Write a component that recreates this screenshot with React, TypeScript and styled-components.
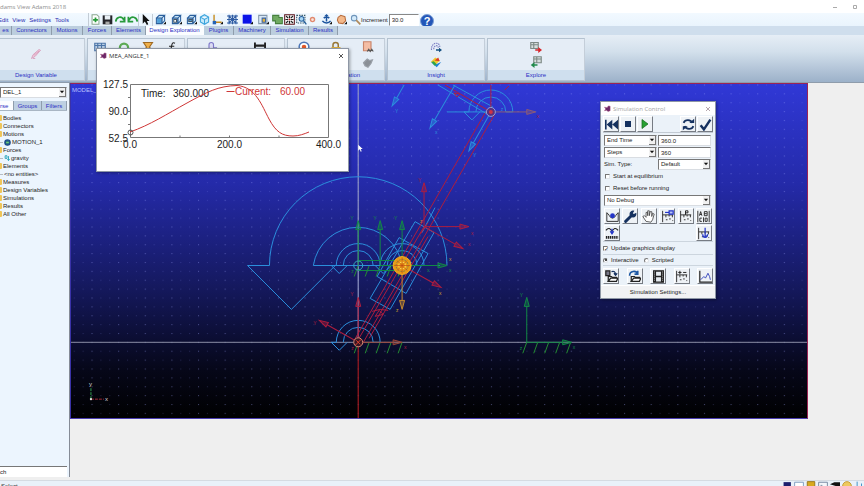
import React, { ReactNode } from 'react';
import styled, { createGlobalStyle } from 'styled-components';

const GlobalStyle = createGlobalStyle`
  * { box-sizing: border-box; }
  html, body, #root { margin: 0; height: 100%; }
  body { font: 6px/8px "Liberation Sans", Arial, sans-serif; color: #222; overflow: hidden; }
  button, input, select { font: inherit; color: inherit; margin: 0; padding: 0; border: 0; border-radius: 0; background: none; }
`;

/* ---------- frame ---------- */
const Shell = styled.div`
  position: relative; display: flex; flex-direction: column;
  min-height: 100vh; height: 100%; background: #efefef; overflow: hidden;
`;
const TitleBar = styled.header`
  display: flex; justify-content: space-between; align-items: center; height: 13px; flex: none;
  background: #fff; color: #8d8d8d; font-family: "Open Sans", sans-serif;
`;
const Caption = styled.h1`margin: 0; font-size: 6px; line-height: 12px; font-weight: 400;`;
const WindowButtons = styled.div`display: flex; gap: 12px; padding-right: 5px;`;
const CaptionButton = styled.button`width: 8px; height: 8px; display: grid; place-items: center;`;

const MenuRow = styled.div`
  display: flex; align-items: center; height: 13px; flex: none;
  background: linear-gradient(#f2f9ff, #e9f4fd);
`;
const Menus = styled.nav`display: flex; gap: 4px; width: 90px; margin-left: -2px;`;
const MenuButton = styled.button`color: #2629b0; white-space: nowrap;`;
const ToolStrip = styled.div`
  display: flex; align-items: center; border-left: 1px solid #c3ccd5; height: 13px;
`;
const ToolButton = styled.button<{ $w: number; $sep?: boolean }>`
  width: ${p => p.$w}px; height: 12px; display: grid; place-items: center;
  border-left: ${p => (p.$sep ? '1px solid #c3ccd5' : '0')};
`;
const IncLabel = styled.label`display: flex; align-items: center; gap: 1px; white-space: nowrap;`;
const IncInput = styled.input`
  width: 30px; height: 12px; padding-left: 2px; background: #fff;
  border: 1px solid #fff; border-top-color: #888; border-left-color: #888;
`;

const TabRow = styled.nav`
  display: grid; height: 9px; flex: none; background: #cfdeed;
  grid-template-columns: 12px 40px 31px 29px 34px 58px 30px 37px 38px 29px;
`;
const Tab = styled.button<{ $active?: boolean }>`
  color: #2b2fc4; white-space: nowrap; text-align: center; line-height: 9px;
  background: ${p => (p.$active ? '#fbfdff' : '#bccede')};
  border-right: 1px solid ${p => (p.$active ? '#fbfdff' : '#8f9dac')};
`;

/* ---------- ribbon ---------- */
const Ribbon = styled.div`
  flex: none; height: 48px; display: flex; gap: 2px; margin-left: -13px; padding: 3px 0 1px;
  background: linear-gradient(#e6eef6, #d3e0ec 35%, #9cb1c9); border-bottom: 1px solid #8e9cab;
`;
const Group = styled.section`
  width: 98px; display: flex; flex-direction: column; background: #e5edf6;
  border: 1px solid #b4c2d0; border-right-color: #c4ced9;
`;
const GroupIcons = styled.div<{ $cols: number }>`
  flex: 1; display: grid; grid-template-columns: repeat(${p => p.$cols}, 1fr);
  grid-auto-rows: 15px; align-content: center; justify-items: center;
`;
const RibbonButton = styled.button`width: 14px; height: 14px; display: grid; place-items: center;`;
const GroupLabel = styled.h2`
  margin: 0; height: 10px; font-size: 6px; line-height: 10px; font-weight: 400; text-align: center;
  color: #2b2fc4; background: #cfdfee;
`;

/* ---------- body ---------- */
const Body = styled.div`flex: 1; display: flex; min-height: 0;`;
const Sidebar = styled.aside`
  width: 70px; flex: none; display: flex; flex-direction: column; padding-top: 4px;
  background: #ecf5fe; border-right: 1px solid #858b96; margin-bottom: 3px;
`;
const SelectBox = styled.span<{ $w?: string }>`
  display: flex; align-items: center; height: 11px; width: ${p => p.$w ?? 'auto'}; min-width: 0;
  background: #fff; border: 1px solid #d9dde2; border-top-color: #777; border-left-color: #777;
`;
const NativeSelect = styled.select`
  appearance: none; flex: 1; min-width: 0; height: 9px; line-height: 9px; padding-left: 2px; outline: 0;
`;
const DropMark = styled.svg`
  flex: none; width: 7px; height: 9px; background: #f1f1f1;
  border-right: 1px solid #777; border-bottom: 1px solid #777;
`;
const TreeTabs = styled.div`
  display: grid; grid-template-columns: 14px 28px 25px; height: 10px; margin: 3px 2px 0 0;
  border-bottom: 1px solid #a9b6c4;
`;
const TreeTab = styled.button<{ $active?: boolean }>`
  color: #2b2fc4; text-align: ${p => (p.$active ? 'left' : 'center')};
  background: ${p => (p.$active ? '#fbfdff' : '#bed0e2')}; border-right: 1px solid #8f9dac;
`;
const Tree = styled.ul`list-style: none; margin: 3px 0 0; padding: 0; flex: 1; font-size: 6px;`;
const TreeItem = styled.li`display: flex; align-items: center; gap: 1px; height: 8px; white-space: nowrap;`;
const FolderEdge = styled.i`width: 2px; height: 6px; background: #efc558; border-radius: 0 1px 1px 0;`;
const Branch = styled.i`width: 3px; height: 1px; background: #b5bcc4;`;
const SearchInput = styled.input`
  height: 11px; width: 67px; background: #fff; border-top: 1px solid #777;
`;
const Stage = styled.main`flex: 1; min-width: 0; display: flex; padding: 0 56px 61px 0;`;
const Scene = styled.svg`
  display: block; width: 100%; height: 100%; min-width: 0;
  border: 1px solid #9b2454; border-left-color: #3a32a8; border-bottom-color: #4a3db0;
`;
const StatusBar = styled.footer`
  height: 6px; flex: none; display: flex; justify-content: space-between; align-items: flex-start;
  padding: 0 0 0 1px; background: #e9f1f9; border-top: 1px solid #d5dbe2; overflow: hidden;
`;
const StatusText = styled.span`line-height: 8px; padding-top: 1px;`;
const StatusIcons = styled.div`display: flex; gap: 2px;`;

/* ---------- floating windows ---------- */
const FloatWindow = styled.section<{ $x: number; $y: number; $w: number }>`
  position: absolute; left: ${p => p.$x}px; top: ${p => p.$y}px; width: ${p => p.$w}px;
  background: #fff; border: 1px solid #8e97a5; box-shadow: 1px 1px 3px rgba(0,0,0,.35);
`;
const FloatTitle = styled.header<{ $dim?: boolean }>`
  display: flex; align-items: center; gap: 2px; height: 13px; padding: 0 3px;
  font-family: "Open Sans", sans-serif; color: ${p => (p.$dim ? '#a5a5a5' : '#333')};
`;
const FloatName = styled.span`flex: 1;`;
const PlotSvg = styled.svg`display: block; width: 100%; height: auto;`;

const SimBody = styled.form`display: flex; flex-direction: column; background: #ebf2f9; padding: 0 2px;`;
const PlayRow = styled.div`display: flex; gap: 1px; height: 18px; padding-top: 1px; border-bottom: 1px solid #c2cad3;`;
const Spacer = styled.span`flex: 1;`;
const PushButton = styled.button`
  width: 16px; height: 16px; display: grid; place-items: center; background: #eef2f6;
  border: 1px solid #fff; border-right-color: #767b83; border-bottom-color: #767b83;
`;
const Fields = styled.div`
  display: grid; grid-template-columns: 53px 53px; column-gap: 1px; row-gap: 1px; padding: 2px 1px 0;
`;
const DebugRow = styled.div`padding: 1px 1px 0;`;
const Field = styled.input`
  width: 53px; height: 11px; padding-left: 2px; background: #fff;
  border: 1px solid #d9dde2; border-top-color: #777; border-left-color: #777;
`;
const FieldLabel = styled.label`line-height: 11px; white-space: nowrap;`;
const Check = styled.label<{ $h: number; $in?: boolean }>`
  display: flex; align-items: center; gap: 3px; height: ${p => p.$h}px; white-space: nowrap;
  padding-left: ${p => (p.$in ? 2 : 0)}px;
`;
const Tick = styled.input`
  appearance: none; width: 5px; height: 5px; background: #fff; display: grid; place-items: center;
  border: 1px solid #e2e5e9; border-top-color: #777; border-left-color: #777;
  &[type='radio'] { border-radius: 50%; }
  &[type='checkbox']:checked::before { content: '✓'; font: bold 6px/4px "DejaVu Sans", sans-serif; }
  &[type='radio']:checked::before { content: ''; width: 2px; height: 2px; border-radius: 50%; background: #111; }
`;
const ToolGrid = styled.div`
  display: grid; grid-template-columns: repeat(6, 16px); justify-content: space-between;
  row-gap: 1px; margin-top: 2px; padding: 0 1px; border-bottom: 1px solid #ccd5de;
`;
const LastCell = styled.div`grid-column: 6;`;
const Radios = styled.fieldset`
  display: flex; gap: 5px; margin: 0; padding: 0; border: solid #ccd5de; border-width: 1px 0;
`;
const BottomRow = styled.div`display: flex; justify-content: space-between; padding: 2px 0 1px;`;
const SettingsButton = styled.button`
  height: 13px; margin: 0 -2px; background: #f1f2f4; border-top: 1px solid #fff; text-align: center;
`;

/* ---------- icons ---------- */
const Icon = ({ size = 11, children }: { size?: number; children: ReactNode }) => (
  <svg width={size} height={size} viewBox="0 0 16 16" fill="none" stroke="#222" strokeWidth="1.5" aria-hidden="true">{children}</svg>
);

const cube = (
  <><path d="M2 6h8v8H2zM2 6l4-4h8L10 6M14 2v8l-4 4" stroke="#2b5f9c" fill="#c9e6f8" /><path d="M10 6v8" stroke="#2b5f9c" /></>
);
const corner = <path d="M12 15h4v-4z" fill="#111" stroke="none" />;

const toolIcons: { name: string; w: number; sep?: boolean; art: ReactNode }[] = [
  { name: 'New', w: 12, art: <><path d="M3 1h7l3 3v11H3z" fill="#fff" stroke="#8ba78f" /><path d="M8 5v7M4.500 8.500h7" stroke="#259b37" strokeWidth="2.500" /></> },
  { name: 'Save', w: 13, art: <><path d="M1 2h14v13H1z" fill="#25252b" stroke="none" /><path d="M4 2h8v6H4z" fill="#e9f0f5" stroke="none" /><path d="M5 11h6v4H5z" fill="#aaa" stroke="none" /></> },
  { name: 'Redo', w: 12, art: <path d="M1 11C2 4 10 2 13 9M14 4v7H7" stroke="#279b3c" strokeWidth="2.500" /> },
  { name: 'Undo', w: 12, art: <path d="M15 11C14 4 6 2 3 9M2 4v7h7" stroke="#279b3c" strokeWidth="2.500" /> },
  { name: 'Select', w: 14, sep: true, art: <path d="M4 0v14l3-3 3 5 2-1-2-5h4z" fill="#111" stroke="none" /> },
  { name: 'Front view', w: 16, sep: true, art: <>{cube}<path d="M3 7h6v6H3z" fill="#4f9fd8" stroke="none" />{corner}</> },
  { name: 'Right view', w: 16, art: <>{cube}<path d="M4 8h4v4H4z" fill="#fff" stroke="#456" />{corner}</> },
  { name: 'Top view', w: 14, art: <>{cube}<path d="M4 8h5v3H4z" fill="#4f9fd8" stroke="#456" />{corner}</> },
  { name: 'Isometric', w: 12, art: <path d="M8 1l6 3.500v7L8 15l-6-3.500v-7zM2 4.500L8 8l6-3.500M8 8v7" stroke="#3aa3dc" fill="#c5e9fa" /> },
  { name: 'Position', w: 15, art: <><path d="M3 1v11h11" stroke="#c58a1c" strokeWidth="2" /><path d="M1 10h5v5H1z" fill="#2262b5" stroke="none" />{corner}</> },
  { name: 'Working grid', w: 15, art: <path d="M0 3h16M0 8h16M0 13h16M3 1v14M8 1v14M13 1v14M3 3l10 10M13 3L3 13" stroke="#2f5da4" strokeWidth="1.600" /> },
  { name: 'Background colour', w: 15, art: <><path d="M1 1h13v13H1z" fill="#0b14e8" stroke="none" />{corner}</> },
  { name: 'Render', w: 16, art: <><path d="M1 2h12v12H1z" fill="#d9e8f5" stroke="#8396aa" /><path d="M6 6h5v6H6z" fill="#e3b23b" stroke="#3a62a0" />{corner}</> },
  { name: 'Shade', w: 12, art: <path d="M1 2h9v3h5v9H5v-4H1z" fill="#6faa62" stroke="#46803e" /> },
  { name: 'Fit view', w: 12, art: <><path d="M1 1h14v14H1z" fill="#fff" stroke="#5a1118" strokeWidth="1.500" /><path d="M8 2v4M8 10v4M2 8h4M10 8h4M3 3l3 3M13 3l-3 3M3 13l3-3M13 13l-3-3" strokeWidth="1.800" /><circle cx="8" cy="8" r="1.500" fill="#b31b24" stroke="none" /></> },
  { name: 'Zoom box', w: 12, art: <><path d="M1 2h12v11H1z" strokeDasharray="2 1.500" stroke="#356" /><circle cx="8" cy="7" r="3.500" fill="#a9d6f4" stroke="#27609c" /><path d="M11 10l4 5" stroke="#27609c" strokeWidth="2" /></> },
  { name: 'Centre', w: 11, art: <circle cx="8" cy="8" r="3" stroke="#e08a70" strokeWidth="2" fill="#fbe6dd" /> },
  { name: 'Rotate', w: 16, art: <><path d="M8 2v9M2 10c3 4 9 4 12 0M4 6c2-2 6-2 8 0" stroke="#1b539e" strokeWidth="2.200" /><path d="M5 3l3-3 3 3z" fill="#1b539e" stroke="none" />{corner}</> },
  { name: 'Pan', w: 15, art: <><path d="M3 5l4-3 6 2 1 6-4 4-6-1-2-4z" fill="#f3b98b" stroke="#b86d3d" />{corner}</> },
  { name: 'Zoom', w: 12, art: <><circle cx="6" cy="6" r="4" fill="#d3eafa" stroke="#6e94ba" /><path d="M9 9l6 6" stroke="#b08a5c" strokeWidth="2.500" /></> },
];

const ribbonArt: Record<string, ReactNode> = {
  variable: <path d="M2 14l2-5 8-7 2 1-7 8-5 3zM5 10l7-6M4 14h3" stroke="#d391b3" fill="#f0cfdf" strokeWidth="1" />,
  table: <path d="M1 3h14v10H1zM1 6h14M5 3v10M10 3v10" stroke="#4d76a8" fill="#bcd0e6" />,
  ring: <circle cx="8" cy="9" r="5.500" stroke="#5daa55" strokeWidth="3" />,
  glass: <path d="M2 2h12l-4 6 4 6H2l4-6z" fill="#f0b04a" stroke="#a06a22" />,
  fx: <path d="M12 3c-4-2-4 1-5 6s-2 6-5 4M4 7h7M10 10l4 4" />,
  plug: <path d="M4 13V5c0-4 6-4 6 0v4h4v4" stroke="#7d78c9" fill="#dcdcf4" />,
  span: <path d="M1 2v12M15 2v12M1 6h14" strokeWidth="3" />,
  target: <><circle cx="8" cy="8" r="6.500" stroke="#4d77b8" fill="#fff" strokeWidth="2" /><circle cx="8" cy="8" r="3" fill="#e35a2b" stroke="none" /></>,
  lock: <><path d="M4 8V5c0-4 7-4 7 0v3" stroke="#977634" strokeWidth="2" /><path d="M2 8h12v7H2z" fill="#e3b33c" stroke="none" /></>,
  formula: <><path d="M2 1h10v12H2z" fill="#f4bda4" stroke="#c98469" /><path d="M7 14l2-3 2 3 2-3 2 3" stroke="#555" /></>,
  gears: <path d="M2 9l5-5 3 2 4-1-2 5-4 5-4-2z" fill="#8b9097" stroke="#9aa0a8" />,
  arcs: <><path d="M2 12C1 1 14 0 13 9M5 11c0-6 6-6 6-2" stroke="#7a7dc4" strokeDasharray="2 1" /><path d="M8 11h4V9l4 3-4 3v-2H8z" fill="#134f80" stroke="none" /></>,
  surface: <><path d="M1 8l6-6 6 4-5 5z" fill="#f0c92a" stroke="none" /><path d="M1 8l7 3 7-3-6 7z" fill="#2483d5" stroke="none" /><path d="M6 6l5-4 2 5z" fill="#df3c25" stroke="none" /><path d="M2 8l4 5 3-2-4-4z" fill="#31a648" stroke="none" /></>,
  exportIt: <><path d="M1 2h10v8H1zM1 5h10M5 2v8" stroke="#7d8a86" fill="#d7dedc" /><path d="M7 11h4V8l5 4-5 4v-3H7z" fill="#d7262b" stroke="none" /></>,
  importIt: <><path d="M5 1h10v8H5zM5 4h10M9 1v8" stroke="#7d8a86" fill="#d7dedc" /><path d="M10 11H6V8l-5 4 5 4v-3h4z" fill="#218a4b" stroke="none" /></>,
};

const groups: { label: string; cols: number; icons: string[] }[] = [
  { label: 'Design Variable', cols: 1, icons: ['variable'] },
  { label: '', cols: 4, icons: ['table', 'ring', 'glass', 'fx', '', '', '', ''] },
  { label: '', cols: 2, icons: ['plug', 'span', '', ''] },
  { label: 'Design Evaluation', cols: 3, icons: ['target', 'lock', 'formula', '', '', 'gears'] },
  { label: 'Insight', cols: 1, icons: ['arcs', 'surface'] },
  { label: 'Explore', cols: 1, icons: ['exportIt', 'importIt'] },
];

const navy = '#15315f';
const table = <path d="M2 1v14M2 6h13M6 6v3M10 6v2M14 6v3M6 12h2M10 11h2M14 13h1" stroke="#333" strokeWidth="1.200" />;
const folder = <><path d="M4 14V8h4l1 1h5v5z" fill="#dfe6ec" stroke="#222" /><path d="M4 14l3-4h9l-2 4z" fill="#fff" stroke="#222" /></>;
const simTools: { name: string; art: ReactNode }[] = [
  { name: 'Static equilibrium', art: <><path d="M1 3v11h14V3" stroke="#333" strokeWidth="1.200" /><path d="M1 4c3 0 3 6 7 6s4-6 7-6" stroke="#333" strokeWidth="1.200" /><circle cx="8" cy="7" r="3" fill="#2335c8" stroke="none" /></> },
  { name: 'Assemble', art: <><path d="M2 14l7-7" stroke={navy} strokeWidth="3.500" strokeLinecap="round" /><path d="M14.500 4.500a3.500 3.500 0 1 1-3-3L10 4l2 2z" fill={navy} stroke={navy} /></> },
  { name: 'Stop on contact', art: <path d="M5 14L1 8l2-1 2 2V3l2 0 0 4V1h2v6l1-5h2v6l1-4 2 1-2 7-2 3z" fill="#fff" stroke="#444" strokeWidth="1" /> },
  { name: 'Linear modes', art: <>{table}<path d="M5 3h5" stroke="#2335c8" strokeWidth="1.500" /><path d="M10 1h5v4h-5z" stroke="#2335c8" fill="#b9c2f5" /></> },
  { name: 'Linear states', art: <>{table}<path d="M8 6V1h3v2.500H8" strokeWidth="1.200" /></> },
  { name: 'State matrix', art: <path d="M1 1v14M15 1v14M3 7l1.500-5L6 7M3.500 5.500h2M9 7V2h3.500v5H9M9 4.500h3M6 10H3.500v4H6M8 9v6M10 10h2.500v4H10z" strokeWidth="1.100" /> },
];
const bottomTools: { name: string; art: ReactNode }[] = [
  { name: 'Save model', art: <>{folder}<path d="M1 1h5v6H1z" fill="#778" /><path d="M8 2c3-1 5 0 5 4M11 4l2 2.500L15 4" stroke={navy} strokeWidth="1.500" /></> },
  { name: 'Reload model', art: <>{folder}<path d="M2 7c0-6 8-7 10-2M12 1v4H8" stroke="#1d58a4" strokeWidth="2" /></> },
  { name: 'Animate', art: <><path d="M2 1h12v14H2z" fill="#222" /><path d="M5 2h6v5H5zM5 9h6v5H5z" fill="#e6ebf0" stroke="none" /><path d="M3 2v12M13 2v12" stroke="#fff" strokeWidth="1" strokeDasharray="1 1.500" /></> },
  { name: 'Results table', art: <>{table}<path d="M4 3h4M6 1v4M10 3h4" strokeWidth="1.200" /></> },
  { name: 'Plot', art: <><path d="M1 1v14h15" /><path d="M2 12l4-4 2 2 3-6 2 4 1 4" stroke="#3b4bbd" strokeWidth="1.200" /></> },
];

const adamsLogo = <path d="M1 5l6 1 3-4 4 1v10l-5 2-3-3-5 1 3-4z" fill="#6d2768" stroke="#a04c7c" strokeWidth="1" />;

const Dropdown = ({ value, label, w, id }: { value: string; label: string; w?: string; id?: string }) => (
  <SelectBox $w={w}>
    <NativeSelect id={id} aria-label={label} defaultValue={value}><option>{value}</option></NativeSelect>
    <DropMark viewBox="0 0 7 9"><path d="M1 3h5L3.500 6z" fill="#111" /></DropMark>
  </SelectBox>
);

/* ---------- model view ---------- */
const CY = '#2b8fdc';
const RD = '#ae1d3e';
const GR = '#128a45';

type P = [number, number];
const Arrow = ({ from, to, color }: { from: P; to: P; color: string }) => {
  const len = Math.hypot(to[0] - from[0], to[1] - from[1]);
  const angle = (Math.atan2(to[1] - from[1], to[0] - from[0]) * 180) / Math.PI;
  return (
    <g transform={`translate(${from[0]} ${from[1]}) rotate(${angle})`} stroke={color}>
      <path d={`M0 0H${len - 9}`} /><path d={`M${len} 0l-9 -2.500v5z`} fill={color} fillOpacity=".45" />
    </g>
  );
};
const Joint = ({ x, y, size = 22 }: { x: number; y: number; size?: number }) => (
  <g stroke={CY}>
    <path d={`M${x - size} ${y}a${size} ${size} 0 0 1 ${size * 2} 0M${x - 15} ${y}a15 15 0 0 1 30 0`} />
    <path d={`M${x - 27} ${y}l8 8 8-8M${x - 27} ${y}h5M${x + 15} ${y}h7`} />
  </g>
);
const Hatch = ({ x, y }: { x: number; y: number }) => (
  <g stroke="#238c31">{[0, 11, 22, 33, 44].map(d => <path key={d} d={`M${x + d} ${y}l-4 11`} />)}</g>
);
const marks: [number, number, string, string][] = [
  [350, 219, 'Y', GR], [373, 219, 'Y', GR], [394, 219, 'Y', GR], [427, 272, 'x', GR], [449, 272, 'x', GR],
  [449, 260, 'x', '#c9a12c'], [351, 273, 'z', GR], [396, 312, 'z', '#c9a12c'], [439, 295, 'x', '#c9a12c'],
  [418, 181, 'Y', RD], [471, 234, 'x', RD], [468, 245, 'x', RD], [350, 296, 'Y', RD], [313, 325, 'Y', RD],
  [404, 349, 'x', RD], [351, 350, 'z', RD], [420, 222, 'z', '#e28028'], [537, 117, 'x', RD], [501, 110, 'z', CY],
  [395, 112, 'Y', CY], [435, 133, 'x', CY], [473, 156, 'Y', CY], [520, 297, 'Y', GR], [573, 349, 'x', GR], [520, 350, 'z', GR],
];

const ModelView = () => (
  <Scene viewBox="70 83 738 336" preserveAspectRatio="xMinYMin slice" fill="none" strokeWidth="1" role="img" aria-label="Mechanism model">
    <defs>
      <linearGradient id="sky" x1="0" y1="0" x2="0" y2="1">
        <stop offset="0" stopColor="#3038d6" /><stop offset=".3" stopColor="#242aa8" />
        <stop offset=".6" stopColor="#15195f" /><stop offset=".85" stopColor="#060719" /><stop offset="1" stopColor="#000" />
      </linearGradient>
      <pattern id="dots" x="353.600" y="337.600" width="8.900" height="8.900" patternUnits="userSpaceOnUse">
        <rect x="4" y="4" width="1" height="1" fill="#8c97ff" opacity=".22" />
      </pattern>
      <pattern id="bright" x="353.600" y="337.600" width="26.700" height="8.900" patternUnits="userSpaceOnUse">
        <rect x="4" y="4" width="1" height="1" fill="#aab4ff" opacity=".25" />
      </pattern>
    </defs>
    <rect x="70" y="83" width="738" height="337" fill="url(#sky)" />
    <rect x="70" y="83" width="738" height="336" fill="url(#dots)" />
    <rect x="70" y="83" width="738" height="336" fill="url(#bright)" />
    <path d="M70 342h738" stroke="#8c8fa6" /><path d="M358 83v259" stroke="#9096c4" strokeWidth="1.200" />
    <path d="M358 342v77" stroke="#a01c22" strokeWidth="1.200" />
    <text x="71" y="91" fontSize="6" fill="#b9c2ff">MODEL_1</text>

    <Hatch x={358} y={265} /><Hatch x={358} y={342} /><Hatch x={527} y={342} />
    <g stroke={CY}>
      <path d="M269 265a89 89 0 0 1 178 0M313 265a45 45 0 0 1 89 0" />
      <path d="M269 265h-22l44 44 44-44h-22M335 265h105" />
      <path d="M415 221l19 11-44 77-20-11zM399 237l29 16-22 40-29-17zM422 232l13-25" />
    </g>
    <Joint x={358} y={265} /><Joint x={402} y={265} /><Joint x={358} y={342} />
    <g stroke={RD}>
      <path d="M354 340L487 109M362 344L495 113" />
      <path d="M357 341L424 226M369 338L428 236" />
      <path d="M420 234l8-12M372 311l8-2 8 1M375 316l4-6 4 4z" />
    </g>
    <path d="M358 260h44M358 270h44M380 265h22" stroke={GR} />
    <Arrow from={[358, 265]} to={[358, 220]} color={GR} />
    <Arrow from={[380, 265]} to={[380, 220]} color={GR} />
    <Arrow from={[402, 265]} to={[402, 220]} color={GR} />
    <Arrow from={[402, 265]} to={[447, 265]} color={GR} />
    <Arrow from={[402, 265]} to={[402, 309]} color="#c58a2c" />
    <Arrow from={[402, 265]} to={[441, 287]} color={RD} />
    <Arrow from={[424, 226]} to={[424, 182]} color={RD} />
    <Arrow from={[424, 226]} to={[469, 226]} color={RD} />
    <Arrow from={[424, 226]} to={[463, 248]} color={RD} />
    <Arrow from={[358, 342]} to={[358, 297]} color={RD} />
    <Arrow from={[358, 342]} to={[319, 320]} color={RD} />
    <Arrow from={[358, 342]} to={[402, 342]} color="#9c4636" />
    <circle cx="358" cy="265" r="4.500" stroke="#37a8b8" />
    <circle cx="402" cy="265" r="9" fill="#e89a16" stroke="#f0ae22" />
    <circle cx="402" cy="265" r="6" stroke="#7f7a45" strokeDasharray="2 1" />
    <circle cx="402" cy="265" r="3.500" stroke="#fbd84c" />
    <path d="M394 265h16M402 257v16M397 260l10 10M407 260l-10 10" stroke="#c14d14" strokeWidth=".7" />
    <circle cx="358" cy="342" r="4.500" stroke="#d08a72" fill="#3a1422" /><path d="M355 345l6-6M356 340l4 4" stroke="#e0452e" />

    <path d="M447 111h46" stroke={CY} />
    <Joint x={491} y={111} />
    <path d="M438 84l49 29M453 84l40 22" stroke={CY} />
    <path d="M445 84l46 27M491 84v27" stroke={RD} />
    <path d="M454 92l6 1-3 3zM505 89l4-4" stroke={RD} />
    <Arrow from={[491, 111]} to={[536, 111]} color="#8c5b75" />
    <Arrow from={[455, 84]} to={[430, 127]} color={CY} />
    <Arrow from={[404, 84]} to={[392, 105]} color={CY} />
    <Arrow from={[491, 111]} to={[469, 150]} color={CY} />
    <circle cx="491" cy="111" r="4.500" stroke="#8fa2dd" fill="#59307f" /><circle cx="491" cy="111" r="2" fill="#d03345" />

    <Arrow from={[527, 342]} to={[527, 297]} color={GR} />
    <Arrow from={[527, 342]} to={[572, 342]} color={GR} />
    {marks.map(([x, y, t, c], i) => <text key={i} x={x} y={y} fontSize="5" fill={c}>{t}</text>)}

    <path d="M90 399v-11" stroke="#2f9f4d" strokeDasharray="3 1" /><path d="M90 399h13" stroke="#a02a36" strokeDasharray="3 1" />
    <path d="M89 398h2v2h-2z" fill="#ddd" />
    <text x="88" y="386" fontSize="6" fill="#ddd">y</text><text x="104" y="401" fontSize="6" fill="#ddd">x</text>
    <path d="M358 144v6l1.500-1.500 1 2.500 1-.5-1-2.300h2z" fill="#fff" />
  </Scene>
);

const Plot = () => (
  <PlotSvg viewBox="97 62 251 109" fill="none" role="img" aria-label="Angle against time"
    fontFamily='"Liberation Sans", Arial, sans-serif' fontSize="10">
    <path d="M130.500 84.500h198v53h-198zM128 97.500h3M128 111.500h3M128 124.500h3M180 137.500v-2M229.500 137.500v-2M279 137.500v-2" stroke="#777" />
    <g fill="#1c1c1c">
      <text x="128" y="88" textAnchor="end">127.5</text>
      <text x="128" y="114.500" textAnchor="end">90.0</text>
      <text x="128" y="141.500" textAnchor="end">52.5</text>
      <text x="130" y="148" textAnchor="middle">0.0</text>
      <text x="229.500" y="148" textAnchor="middle">200.0</text>
      <text x="328.500" y="148" textAnchor="middle">400.0</text>
      <text x="141" y="97">Time:</text><text x="173" y="97">360.000</text>
    </g>
    <path d="M130 132C150 125 167 114 187 103S218 86 237 85.500C256 87 262 106 269 119S282 136 293 136C299 136 304 134 309 132" stroke="#cf3636" />
    <path d="M226.500 91.500h8" stroke="#cf3636" />
    <g fill="#cf3636"><text x="235" y="95">Current:</text><text x="280" y="95">60.00</text></g>
    <circle cx="130.500" cy="132.500" r="2.500" stroke="#555" />
  </PlotSvg>
);

const tree: { text: string; kind: 'folder' | 'motion' | 'gravity' | 'none' }[] = [
  { text: 'Bodies', kind: 'folder' }, { text: 'Connectors', kind: 'folder' }, { text: 'Motions', kind: 'folder' },
  { text: 'MOTION_1', kind: 'motion' }, { text: 'Forces', kind: 'folder' }, { text: 'gravity', kind: 'gravity' },
  { text: 'Elements', kind: 'folder' }, { text: '<no entities>', kind: 'none' }, { text: 'Measures', kind: 'folder' },
  { text: 'Design Variables', kind: 'folder' }, { text: 'Simulations', kind: 'folder' },
  { text: 'Results', kind: 'folder' }, { text: 'All Other', kind: 'folder' },
];
const tabs = ['es', 'Connectors', 'Motions', 'Forces', 'Elements', 'Design Exploration', 'Plugins', 'Machinery', 'Simulation', 'Results'];

export default function App() {
  return (
    <Shell>
      <GlobalStyle />
      <TitleBar>
        <Caption>dams View Adams 2018</Caption>
        <WindowButtons>
          <CaptionButton aria-label="Minimize"><svg width="6" height="6"><path d="M1 3.500h4" stroke="#aaa" /></svg></CaptionButton>
          <CaptionButton aria-label="Maximize"><svg width="6" height="6"><path d="M1.500 1.500h3v3h-3z" stroke="#aaa" fill="none" /></svg></CaptionButton>
        </WindowButtons>
      </TitleBar>
      <MenuRow>
        <Menus>{['Edit', 'View', 'Settings', 'Tools'].map(m => <MenuButton key={m}>{m}</MenuButton>)}</Menus>
        <ToolStrip>
          {toolIcons.map(t => <ToolButton key={t.name} $w={t.w} $sep={t.sep} aria-label={t.name}><Icon>{t.art}</Icon></ToolButton>)}
        </ToolStrip>
        <IncLabel>Increment<IncInput defaultValue="30.0" /></IncLabel>
        <ToolButton $w={17} aria-label="Help">
          <svg width="14" height="14" viewBox="0 0 14 14">
            <circle cx="7" cy="7" r="6.500" fill="#2256b8" stroke="#7f9fd3" />
            <text x="7" y="11" textAnchor="middle" fontSize="11" fontWeight="700" fill="#fff">?</text>
          </svg>
        </ToolButton>
      </MenuRow>
      <TabRow>{tabs.map(t => <Tab key={t} $active={t === 'Design Exploration'}>{t}</Tab>)}</TabRow>
      <Ribbon>
        {groups.map((g, i) => (
          <Group key={i}>
            <GroupIcons $cols={g.cols}>
              {g.icons.map((n, k) => (n ? <RibbonButton key={k} aria-label={n}><Icon size={12}>{ribbonArt[n]}</Icon></RibbonButton> : <span key={k} />))}
            </GroupIcons>
            <GroupLabel>{g.label}</GroupLabel>
          </Group>
        ))}
      </Ribbon>
      <Body>
        <Sidebar>
          <Dropdown value="DEL_1" label="Model" w="67px" />
          <TreeTabs><TreeTab $active>rse</TreeTab><TreeTab>Groups</TreeTab><TreeTab>Filters</TreeTab></TreeTabs>
          <Tree>
            {tree.map(n => (
              <TreeItem key={n.text}>
                {n.kind === 'folder' ? <FolderEdge /> : <Branch />}
                {n.kind === 'motion' && <Icon size={7}><circle cx="8" cy="8" r="6" fill="#2c6e7d" stroke="#1c4b8c" strokeWidth="3" /><path d="M5 8h6" stroke="#6fd07c" strokeWidth="3" /></Icon>}
                {n.kind === 'gravity' && <Icon size={6}><path d="M3 2h5v7H3zM12 3v11M9 11l3 4 3-4" stroke="#2aa5bd" strokeWidth="2.500" /></Icon>}
                {n.text}
              </TreeItem>
            ))}
          </Tree>
          <SearchInput aria-label="Search" defaultValue="ch" />
        </Sidebar>
        <Stage><ModelView /></Stage>
      </Body>
      <StatusBar>
        <StatusText>Select</StatusText>
        <StatusIcons>
          <Icon size={9}><path d="M1 2h13v14H1z" fill="#1c1f6e" stroke="none" /></Icon>
          <Icon size={10}><path d="M1 2h14v14H1z" fill="#fff" stroke="#7e9cbf" /></Icon>
          <Icon size={10}><path d="M2 1h12v15H2z" fill="#d9a91f" stroke="#99761b" /></Icon>
          <Icon size={10}><path d="M1 2h14v14H1zM4 7h3" fill="#f3f6fa" stroke="#7587a0" /></Icon>
          <Icon size={10}><path d="M0 5l7-3h9v7l-3 3-4-4z" fill="#111" stroke="none" /></Icon>
          <Icon size={10}><circle cx="8" cy="8" r="7" fill="#eec95d" stroke="#c59b36" /></Icon>
          <Icon size={10}><path d="M5 1v14M1 9h8M12 4v11" stroke="#3b8fc6" /></Icon>
        </StatusIcons>
      </StatusBar>

      <FloatWindow $x={96} $y={48} $w={253} aria-label="MEA_ANGLE_1">
        <FloatTitle>
          <Icon size={7}>{adamsLogo}</Icon><FloatName>MEA_ANGLE_1</FloatName>
          <CaptionButton aria-label="Close"><svg width="6" height="6"><path d="M1 1l4 4M5 1l-4 4" stroke="#555" /></svg></CaptionButton>
        </FloatTitle>
        <Plot />
      </FloatWindow>

      <FloatWindow $x={600} $y={101} $w={116} aria-label="Simulation Control">
        <FloatTitle $dim>
          <Icon size={7}>{adamsLogo}</Icon><FloatName>Simulation Control</FloatName>
          <CaptionButton aria-label="Close"><svg width="6" height="6"><path d="M1 1l4 4M5 1l-4 4" stroke="#b5a5ad" /></svg></CaptionButton>
        </FloatTitle>
        <SimBody onSubmit={e => e.preventDefault()}>
          <PlayRow>
            <PushButton type="button" aria-label="Rewind"><Icon size={13}><path d="M1 2v12" stroke={navy} strokeWidth="2" /><path d="M9 2v12L2 8zM16 2v12L9 8z" fill={navy} stroke="none" /></Icon></PushButton>
            <PushButton type="button" aria-label="Stop"><Icon size={12}><path d="M4 4h8v8H4z" fill={navy} stroke="none" /></Icon></PushButton>
            <PushButton type="button" aria-label="Play"><Icon size={12}><path d="M4 2v12l8-6z" fill="#27a031" stroke="#186b20" strokeWidth="1" /></Icon></PushButton>
            <Spacer />
            <PushButton type="button" aria-label="Reset"><Icon size={13}><path d="M2 6c2-5 9-4 11 0M14 10c-2 5-9 4-11 0" stroke={navy} strokeWidth="2.200" /><path d="M9 6h6V1zM7 10H1v5z" fill={navy} stroke="none" /></Icon></PushButton>
            <PushButton type="button" aria-label="Verify"><Icon size={13}><path d="M2 9l4 5L14 2" stroke={navy} strokeWidth="3" /></Icon></PushButton>
          </PlayRow>
          <Fields>
            <Dropdown value="End Time" label="End mode" /><Field aria-label="End time" defaultValue="360.0" />
            <Dropdown value="Steps" label="Step mode" /><Field aria-label="Steps" defaultValue="360" />
            <FieldLabel htmlFor="simtype">Sim. Type:</FieldLabel><Dropdown id="simtype" value="Default" label="Sim. Type" />
          </Fields>
          <Check $h={12} $in><Tick type="checkbox" />Start at equilibrium</Check>
          <Check $h={12} $in><Tick type="checkbox" />Reset before running</Check>
          <DebugRow><Dropdown value="No Debug" label="Debug" w="107px" /></DebugRow>
          <ToolGrid>
            {simTools.map(t => <PushButton type="button" key={t.name} aria-label={t.name}><Icon size={13}>{t.art}</Icon></PushButton>)}
            <PushButton type="button" aria-label="Nastran"><Icon size={14}><path d="M1 5c3-4 5-2 7 1 2-3 4-5 7-1" strokeWidth="1.200" /><path d="M8 3v5M6 6l2 3 2-3" stroke="#2335c8" /><path d="M1 13h14" strokeWidth="3" strokeDasharray="1.500 .7" /></Icon></PushButton>
            <LastCell><PushButton type="button" aria-label="Vibration"><Icon size={13}>{table}<path d="M10 1v12M7 9c0 5 6 5 6 0" stroke="#2335c8" /></Icon></PushButton></LastCell>
          </ToolGrid>
          <Check $h={12}><Tick type="checkbox" defaultChecked />Update graphics display</Check>
          <Radios aria-label="Mode">
            <Check $h={10}><Tick type="radio" name="mode" defaultChecked />Interactive</Check>
            <Check $h={10}><Tick type="radio" name="mode" />Scripted</Check>
          </Radios>
          <BottomRow>
            {bottomTools.map(t => <PushButton type="button" key={t.name} aria-label={t.name}><Icon size={13}>{t.art}</Icon></PushButton>)}
          </BottomRow>
          <SettingsButton type="button">Simulation Settings...</SettingsButton>
        </SimBody>
      </FloatWindow>
    </Shell>
  );
}
